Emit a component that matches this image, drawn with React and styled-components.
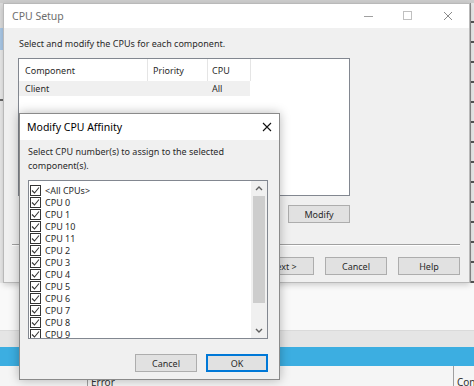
import styled, { createGlobalStyle } from "styled-components";

const GlobalStyle = createGlobalStyle`
  html, body {
    margin: 0;
    padding: 0;
  }
  body {
    font-family: "Noto Sans", "Open Sans", sans-serif;
    background: #f7f7f7;
  }
`;

const Screen = styled.div`
  position: relative;
  width: 474px;
  height: 386px;
  overflow: hidden;
  display: flex;
  flex-direction: column;
  background: #f8f8f8;
  font-size: 9px;
  color: #2a2a2a;
`;

const TopStrip = styled.div`
  height: 3px;
  background: #cdcdcd;
  flex-shrink: 0;
`;

const MiddleRow = styled.div`
  display: flex;
  flex-shrink: 0;
`;

const LeftEdge = styled.div`
  width: 3px;
  background: linear-gradient(#dcdcdc 0 25px, #a9c7e6 25px 47px, #e9e9e9 47px 96px, #666 96px 98px, #e9e9e9 98px);
`;

const RightEdge = styled.div`
  width: 3px;
  background: repeating-linear-gradient(#e9e9e9 0 18px, #555 18px 20px);
  border-left: 1px solid #8c8c8c;
`;

const SetupWindow = styled.div`
  width: 466px;
  height: 278px;
  border: 1px solid #b9b9b9;
  display: flex;
  flex-direction: column;
  box-shadow: 0 2px 6px rgba(0, 0, 0, 0.18);
  z-index: 1;
`;

const TitleBar = styled.div`
  height: ${p => p.$h}px;
  background: #fff;
  display: flex;
  align-items: center;
  padding-left: ${p => p.$pad}px;
  flex-shrink: 0;
`;

const Title = styled.div`
  flex: 1;
  font-size: 10.5px;
  color: ${p => (p.$active ? "#000" : "#6d6d6d")};
`;

const CaptionButton = styled.div`
  width: ${p => p.$w}px;
  height: 100%;
  display: flex;
  align-items: center;
  justify-content: center;
`;

const WindowBody = styled.div`
  flex: 1;
  background: #f0f0f0;
  display: flex;
  flex-direction: column;
  padding: 9px 9px 0 14px;
`;

const Prompt = styled.div`
  line-height: 13px;
  padding-left: 1px;
`;

const ListView = styled.div`
  margin-top: 8px;
  width: 330px;
  height: 136px;
  border: 1px solid #828790;
  background: #fff;
`;

const HeaderRow = styled.div`
  display: flex;
  height: 22px;
  align-items: center;
`;

const DataRow = styled.div`
  display: flex;
  height: 15px;
  align-items: center;
  background: #f0f0f0;
  width: 231px;
`;

const Cell = styled.div`
  width: ${p => p.$w}px;
  height: 100%;
  display: flex;
  align-items: center;
  padding-left: ${p => p.$pad}px;
  box-sizing: border-box;
  border-right: ${p => (p.$sep ? "1px solid #e5e5e5" : "none")};
`;

const ModifyRow = styled.div`
  width: 332px;
  display: flex;
  justify-content: flex-end;
  margin-top: 9px;
`;

const Button = styled.div`
  width: 62px;
  height: 18px;
  box-sizing: border-box;
  border: 1px solid ${p => (p.$default ? "#0078d7" : "#adadad")};
  box-shadow: ${p => (p.$default ? "inset 0 0 0 1px #0078d7" : "none")};
  background: #e1e1e1;
  display: flex;
  align-items: center;
  justify-content: center;
`;

const Separator = styled.div`
  margin: 21px 0 0 -6px;
  border-top: 1px solid #a0a0a0;
  border-bottom: 1px solid #fff;
`;

const WizardButtons = styled.div`
  display: flex;
  justify-content: flex-end;
  gap: 11px;
  margin-top: 11px;
`;

const ButtonPair = styled.div`
  display: flex;
`;

const LowerArea = styled.div`
  height: 47px;
  background: #f9f9f9;
  flex-shrink: 0;
`;

const GrayStrip = styled.div`
  height: 17px;
  background: #e5e5e5;
  border-top: 1px solid #dadada;
  box-sizing: border-box;
  flex-shrink: 0;
`;

const BlueBar = styled.div`
  height: 19px;
  background: #3caee1;
  flex-shrink: 0;
`;

const StatusRow = styled.div`
  flex: 1;
  display: flex;
  background: #f5f5f5;
  font-size: 10px;
  color: #333;
`;

const StatusCell = styled.div`
  width: ${p => p.$w}px;
  border-left: ${p => (p.$sep ? "1px solid #a0a0a0" : "none")};
  padding: 11px 0 0 3px;
  box-sizing: border-box;
  line-height: 10px;
`;

/* dialog floats over the setup window */
const Dialog = styled.div`
  position: absolute;
  left: 19px;
  top: 113px;
  width: 261px;
  height: 267px;
  box-sizing: border-box;
  border: 1px solid #8a8a8a;
  display: flex;
  flex-direction: column;
  background: #f0f0f0;
  box-shadow: 0 0 10px rgba(0, 0, 0, 0.28);
  z-index: 2;
`;

const DialogBody = styled.div`
  flex: 1;
  display: flex;
  flex-direction: column;
  padding: 5px 0 0 8px;
`;

const Prompt2 = styled.div`
  line-height: 14px;
  width: 200px;
`;

const ListBox = styled.div`
  margin-top: 7px;
  width: 240px;
  height: 159px;
  box-sizing: border-box;
  border: 1px solid #828790;
  background: #fff;
  display: flex;
  overflow: hidden;
`;

const Items = styled.div`
  flex: 1;
  padding: 3px 0 0 1px;
`;

const Item = styled.div`
  height: 12px;
  display: flex;
  align-items: center;
  gap: 4px;
`;

const Box = styled.div`
  width: 11px;
  height: 11px;
  box-sizing: border-box;
  border: 1px solid #333;
  background: #fff;
  display: flex;
  align-items: center;
  justify-content: center;
`;

const ScrollBar = styled.div`
  width: 16px;
  background: #f0f0f0;
  display: flex;
  flex-direction: column;
  align-items: center;
`;

const Arrow = styled.div`
  height: 15px;
  display: flex;
  align-items: center;
  justify-content: center;
`;

const Thumb = styled.div`
  width: 12px;
  height: 107px;
  background: #cdcdcd;
`;

const Track = styled.div`
  flex: 1;
`;

const DialogButtons = styled.div`
  display: flex;
  justify-content: flex-end;
  gap: 9px;
  width: 240px;
  margin-top: 15px;
`;

const Check = () => (
  <Box>
    <svg width="9" height="9" viewBox="0 0 9 9">
      <path d="M1 4.5 L3.5 7 L8 1.5" fill="none" stroke="#333" strokeWidth="1.1" />
    </svg>
  </Box>
);

const Chevron = ({ up }) => (
  <svg width="8" height="5" viewBox="0 0 8 5">
    <path d={up ? "M1 4 L4 1 L7 4" : "M1 1 L4 4 L7 1"} fill="none" stroke="#606060" strokeWidth="1.4" />
  </svg>
);

const cpus = ["<All CPUs>", "CPU 0", "CPU 1", "CPU 10", "CPU 11", "CPU 2", "CPU 3", "CPU 4", "CPU 5", "CPU 6", "CPU 7", "CPU 8", "CPU 9"];

const App = () => {
  return (
    <Screen>
      <GlobalStyle />
      <TopStrip />
      <MiddleRow>
        <LeftEdge />
        <SetupWindow>
          <TitleBar $h={24} $pad={8}>
            <Title>CPU Setup</Title>
            <CaptionButton $w={40}>
              <svg width="10" height="10" viewBox="0 0 10 10">
                <path d="M0 5.5 H9" stroke="#a0a0a0" strokeWidth="1" />
              </svg>
            </CaptionButton>
            <CaptionButton $w={38}>
              <svg width="10" height="10" viewBox="0 0 10 10">
                <rect x="0.5" y="0.5" width="8" height="8" fill="none" stroke="#c0c0c0" />
              </svg>
            </CaptionButton>
            <CaptionButton $w={42}>
              <svg width="10" height="10" viewBox="0 0 10 10">
                <path d="M1 1 L9 9 M9 1 L1 9" stroke="#8a8a8a" strokeWidth="1" />
              </svg>
            </CaptionButton>
          </TitleBar>
          <WindowBody>
            <Prompt>Select and modify the CPUs for each component.</Prompt>
            <ListView>
              <HeaderRow>
                <Cell $w={129} $pad={6} $sep>Component</Cell>
                <Cell $w={60} $pad={5} $sep>Priority</Cell>
                <Cell $w={43} $pad={4} $sep>CPU</Cell>
              </HeaderRow>
              <DataRow>
                <Cell $w={189} $pad={6}>Client</Cell>
                <Cell $w={42} $pad={4}>All</Cell>
              </DataRow>
            </ListView>
            <ModifyRow>
              <Button>Modify</Button>
            </ModifyRow>
            <Separator />
            <WizardButtons>
              <ButtonPair>
                <Button>&lt; Back</Button>
                <Button>Next &gt;</Button>
              </ButtonPair>
              <Button>Cancel</Button>
              <Button>Help</Button>
            </WizardButtons>
          </WindowBody>
        </SetupWindow>
        <RightEdge />
      </MiddleRow>
      <LowerArea />
      <GrayStrip />
      <BlueBar />
      <StatusRow>
        <StatusCell $w={87} />
        <StatusCell $w={366} $sep>Error</StatusCell>
        <StatusCell $w={21} $sep>Con</StatusCell>
      </StatusRow>

      <Dialog>
        <TitleBar $h={26} $pad={7}>
          <Title $active>Modify CPU Affinity</Title>
          <CaptionButton $w={24}>
            <svg width="10" height="10" viewBox="0 0 10 10">
              <path d="M1 1 L9 9 M9 1 L1 9" stroke="#111" strokeWidth="1.1" />
            </svg>
          </CaptionButton>
        </TitleBar>
        <DialogBody>
          <Prompt2>Select CPU number(s) to assign to the selected component(s).</Prompt2>
          <ListBox>
            <Items>
              {cpus.map(c => (
                <Item key={c}>
                  <Check />
                  {c}
                </Item>
              ))}
            </Items>
            <ScrollBar>
              <Arrow><Chevron up /></Arrow>
              <Thumb />
              <Track />
              <Arrow><Chevron /></Arrow>
            </ScrollBar>
          </ListBox>
          <DialogButtons>
            <Button>Cancel</Button>
            <Button $default>OK</Button>
          </DialogButtons>
        </DialogBody>
      </Dialog>
    </Screen>
  );
};

export default App;
